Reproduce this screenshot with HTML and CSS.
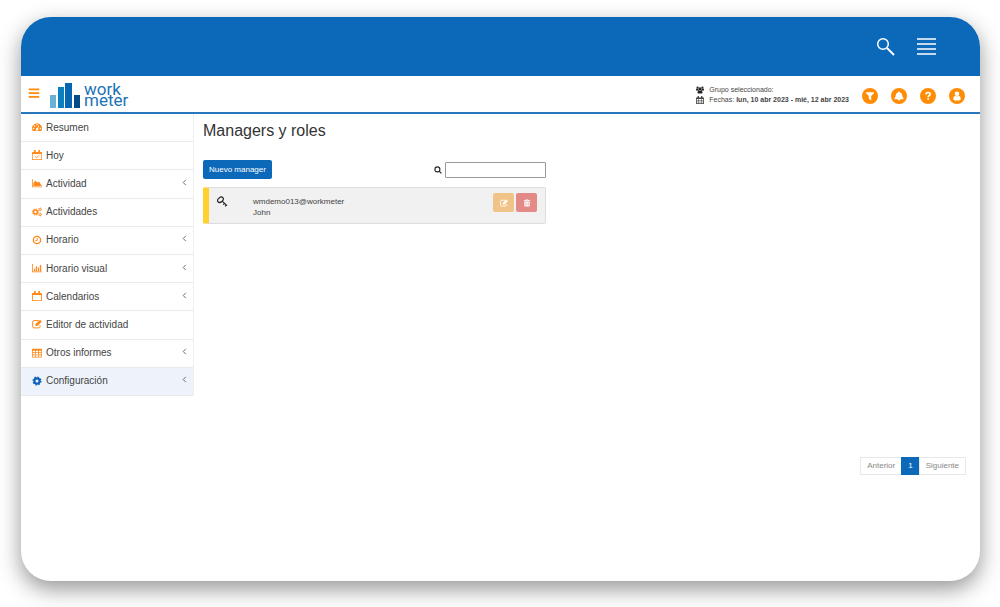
FILE: index.html
```html
<!DOCTYPE html>
<html lang="es">
<head>
    <meta charset="UTF-8">
    <meta name="viewport" content="width=device-width, initial-scale=1.0">
    <title>Managers y roles</title>
    <link rel="stylesheet" href="styles.css">
</head>
<body>
    <!-- Icon sprite -->
    <svg class="sprite" aria-hidden="true">
        <symbol id="i-dash" viewBox="0 0 16 16"><path fill-rule="evenodd" d="M8 2a8 8 0 0 0-6.700 12.300h13.400A8 8 0 0 0 8 2zM8 3.200a1.200 1.200 0 1 1 0 2.400a1.200 1.200 0 1 1 0-2.400zM4 5a1.200 1.200 0 1 1 0 2.400a1.200 1.200 0 1 1 0-2.400zM2.500 9a1.200 1.200 0 1 1 0 2.400a1.200 1.200 0 1 1 0-2.400zM13.500 9a1.200 1.200 0 1 1 0 2.400a1.200 1.200 0 1 1 0-2.400zM10.500 5.500l1 .4-1.900 4.300a2 2 0 1 1-1.300-.5z"/></symbol>
        <symbol id="i-check-cal" viewBox="0 0 16 16"><path fill-rule="evenodd" d="M1 3h2V1q0-1 1-1h1q1 0 1 1v2h4V1q0-1 1-1h1q1 0 1 1v2h2q1 0 1 1v11q0 1-1 1H1q-1 0-1-1V4q0-1 1-1zM1.200 6.500v8.300h13.600V6.500z"/><path d="M5 10.300l2.300 2.200 4.200-4.200" fill="none" stroke="currentColor" stroke-width="1.500"/></symbol>
        <symbol id="i-cal" viewBox="0 0 16 16"><path fill-rule="evenodd" d="M1 3h2V1q0-1 1-1h1q1 0 1 1v2h4V1q0-1 1-1h1q1 0 1 1v2h2q1 0 1 1v11q0 1-1 1H1q-1 0-1-1V4q0-1 1-1zM1.400 6.500v8.200h13.200V6.500z"/></symbol>
        <symbol id="i-cal-grid" viewBox="0 0 16 16"><path fill-rule="evenodd" d="M1 3h2V1q0-1 1-1h1q1 0 1 1v2h4V1q0-1 1-1h1q1 0 1 1v2h2q1 0 1 1v11q0 1-1 1H1q-1 0-1-1V4q0-1 1-1zM1.500 6v2.300h3V6zm4 0v2.300h4.500V6zm5.500 0v2.300h3.500V6zM1.500 9.300v2.200h3V9.300zm4 0v2.200h4.500V9.300zm5.500 0v2.200h3.500V9.300zM1.500 12.500v2.200h3v-2.200zm4 0v2.200h4.500v-2.200zm5.500 0v2.200h3.500v-2.200z"/></symbol>
        <symbol id="i-area" viewBox="0 0 16 16"><path d="M0 2h1.300v11.500H16v1.300H0zM2.200 12.800V8.500L5.200 4l3.200 3 3-1.500 4.100 7.300z"/></symbol>
        <symbol id="i-bars-chart" viewBox="0 0 16 16"><path d="M0 1.500h1.300v12h14.700v1.300H0zM3 9h2v4H3zM6 5h2v8H6zM9.300 7h2v6h-2zM12.500 3h2.200v10h-2.200z"/></symbol>
        <symbol id="i-cogs" viewBox="0 0 16 16"><g fill="none" stroke="currentColor"><circle cx="5.500" cy="8" r="3.200" stroke-width="2.600"/><circle cx="5.500" cy="8" r="4.900" stroke-width="1.600" stroke-dasharray="1.920"/><circle cx="13" cy="3.800" r="1.600" stroke-width="1.400"/><circle cx="13" cy="3.800" r="2.500" stroke-width="1" stroke-dasharray="1.300"/><circle cx="13" cy="12.200" r="1.600" stroke-width="1.400"/><circle cx="13" cy="12.200" r="2.500" stroke-width="1" stroke-dasharray="1.300"/></g></symbol>
        <symbol id="i-cog" viewBox="0 0 16 16"><g fill="none" stroke="currentColor"><circle cx="8" cy="8" r="4.200" stroke-width="3.500"/><circle cx="8" cy="8" r="6.300" stroke-width="2" stroke-dasharray="2.470"/></g></symbol>
        <symbol id="i-clock" viewBox="0 0 16 16"><g fill="none" stroke="currentColor"><circle cx="8" cy="8" r="5.800" stroke-width="2.200"/><path d="M8.500 4.500v4.200H5.200" stroke-width="1.400"/></g></symbol>
        <symbol id="i-edit" viewBox="0 0 16 16"><path d="M10.500 2.500H3.200Q1 2.500 1 5v7q0 2.200 2.200 2.200h7.500q2.200 0 2.200-2.200V10" fill="none" stroke="currentColor" stroke-width="1.600"/><path d="M12.800 1l3 3L9 11H5.500V7.800z"/></symbol>
        <symbol id="i-table" viewBox="0 0 16 16"><path fill-rule="evenodd" d="M1 1h14q1 0 1 1v12q0 1-1 1H1q-1 0-1-1V2q0-1 1-1zM1.200 4.500v2.300h3.700V4.500zm4.900 0v2.300h3.800V4.500zm5 0v2.300h3.700V4.500zM1.200 8v2.300h3.700V8zm4.900 0v2.300h3.800V8zm5 0v2.300h3.700V8zM1.200 11.500v2.300h3.700v-2.300zm4.900 0v2.300h3.800v-2.300zm5 0v2.300h3.700v-2.300z"/></symbol>
        <symbol id="i-chevron" viewBox="0 0 16 16"><path d="M11 2L5 8l6 6" fill="none" stroke="currentColor" stroke-width="2.200"/></symbol>
        <symbol id="i-menu" viewBox="0 0 16 16"><path d="M1 2h14v2.200H1zM1 7h14v2.200H1zM1 12h14v2.200H1z"/></symbol>
        <symbol id="i-search" viewBox="0 0 16 16"><g fill="none" stroke="currentColor" stroke-width="2.200"><circle cx="6.800" cy="6.800" r="5"/><path d="M10.500 10.500l4.300 4.300"/></g></symbol>
        <symbol id="i-key" viewBox="0 0 16 16"><g fill="none" stroke="currentColor" stroke-width="1.700"><ellipse cx="5" cy="5.500" rx="4.600" ry="3.200" transform="rotate(-40 5 5.500)"/><path d="M7.500 7.500l7 6.500M11.200 10.500l-2 2.200M14 12.500l-2.200 2.500"/></g></symbol>
        <symbol id="i-trash" viewBox="0 0 16 16"><path fill-rule="evenodd" d="M5 2.500Q5 1 6.500 1h3Q11 1 11 2.500h3.500V4h-13V2.500zm1.200 0h3.600L9.300 2H6.700zM2.500 5h11v8.500q0 1.500-1.500 1.500H4q-1.500 0-1.500-1.500zM5 7v6h1V7zm2.500 0v6h1V7zM10 7v6h1V7z"/></symbol>
        <symbol id="i-users" viewBox="0 0 16 16"><circle cx="3.200" cy="3.200" r="2.200"/><circle cx="12.800" cy="3.200" r="2.200"/><circle cx="8" cy="5.500" r="3"/><path d="M0 9V7q0-2 1.500-2l3 .6Q4.500 8 6 8.800H3.800zM16 9V7q0-2-1.500-2l-3 .6Q11.500 8 10 8.800h2.200zM3 13.500Q3 9 5.500 8.700q2.500 1 5 0Q13 9 13 13.500 13 15 11.500 15h-7Q3 15 3 13.500z"/></symbol>
        <symbol id="i-filter" viewBox="0 0 16 16"><path d="M2 2h12q1 .5.300 1.400L9.900 8v6q-.3 1-1.200.4L6.100 12V8L1.700 3.400Q1 2.500 2 2z"/></symbol>
        <symbol id="i-bell" viewBox="0 0 16 16"><path d="M7 1q1-1 2 0v.8Q12.800 2.500 13 6q.2 4 2.500 6-.2 1-1.200 1h-4.300q-.3 2-2 2t-2-2H1.700q-1 0-1.200-1Q2.800 10 3 6 3.200 2.500 7 1.800z"/></symbol>
        <symbol id="i-help" viewBox="0 0 16 16"><path d="M4.500 5.500Q5 2.300 8.200 2.300q3.300 0 3.300 2.600Q11.500 6.600 9.600 7.600 8.200 8.400 8.200 10" fill="none" stroke="currentColor" stroke-width="2.600"/><path d="M6.900 11.500h2.700V14H6.900z"/></symbol>
        <symbol id="i-user" viewBox="0 0 16 16"><circle cx="8" cy="4.500" r="3.700"/><path d="M2 12.500Q2 8 5 7.500q3 2 6 0Q14 8 14 12.500q0 2.500-2.500 2.500h-7Q2 15 2 12.500z"/></symbol>
    </svg>

    <div class="window">
        <div class="topbar">
            <button class="top-button" aria-label="Buscar">
                <svg class="top-icon" viewBox="0 0 20 20"><g fill="none" stroke="currentColor" stroke-width="1.500"><circle cx="7" cy="7" r="5.300"/><path d="M11 11l7 7" stroke-width="2"/></g></svg>
            </button>
            <button class="top-button" aria-label="Menú">
                <svg class="top-icon" viewBox="0 0 20 20"><path d="M1 2h19M1 7h19M1 12h19M1 17h19" fill="none" stroke="currentColor" stroke-width="1.500"/></svg>
            </button>
        </div>

        <header class="header">
            <button class="menu-toggle" aria-label="Mostrar menú"><svg class="icon-menu"><use href="#i-menu"/></svg></button>
            <a class="logo" href="#">
                <svg class="logo-bars" viewBox="0 0 30 25">
                    <path fill="#6bb1d6" d="M0 12h6v13H0z"/>
                    <path fill="#0a80c0" d="M8 4h6v21H8z"/>
                    <path fill="#0567b2" d="M15 0h7v25h-7z"/>
                    <path fill="#024b88" d="M24 12h6v13h-6z"/>
                </svg>
                <span class="logo-text">work<br>meter</span>
            </a>
            <div class="selection">
                <div class="selection-row"><svg class="icon-small dark"><use href="#i-users"/></svg><span>Grupo seleccionado:</span></div>
                <div class="selection-row"><svg class="icon-small"><use href="#i-cal-grid"/></svg><span>Fechas: <b>lun, 10 abr 2023 - mié, 12 abr 2023</b></span></div>
            </div>
            <div class="actions">
                <button class="round" aria-label="Filtro"><svg><use href="#i-filter"/></svg></button>
                <button class="round" aria-label="Avisos"><svg><use href="#i-bell"/></svg></button>
                <button class="round" aria-label="Ayuda"><svg><use href="#i-help"/></svg></button>
                <button class="round" aria-label="Usuario"><svg><use href="#i-user"/></svg></button>
            </div>
        </header>

        <div class="content">
            <nav class="sidebar">
                <a href="#"><svg class="icon"><use href="#i-dash"/></svg>Resumen</a>
                <a href="#"><svg class="icon"><use href="#i-check-cal"/></svg>Hoy</a>
                <a href="#"><svg class="icon"><use href="#i-area"/></svg>Actividad<svg class="chevron"><use href="#i-chevron"/></svg></a>
                <a href="#"><svg class="icon"><use href="#i-cogs"/></svg>Actividades</a>
                <a href="#"><svg class="icon"><use href="#i-clock"/></svg>Horario<svg class="chevron"><use href="#i-chevron"/></svg></a>
                <a href="#"><svg class="icon"><use href="#i-bars-chart"/></svg>Horario visual<svg class="chevron"><use href="#i-chevron"/></svg></a>
                <a href="#"><svg class="icon"><use href="#i-cal"/></svg>Calendarios<svg class="chevron"><use href="#i-chevron"/></svg></a>
                <a href="#"><svg class="icon"><use href="#i-edit"/></svg>Editor de actividad</a>
                <a href="#"><svg class="icon"><use href="#i-table"/></svg>Otros informes<svg class="chevron"><use href="#i-chevron"/></svg></a>
                <a href="#" class="active"><svg class="icon"><use href="#i-cog"/></svg>Configuración<svg class="chevron"><use href="#i-chevron"/></svg></a>
            </nav>

            <main class="main">
                <h1>Managers y roles</h1>
                <section class="managers">
                    <div class="toolbar">
                        <button class="new-manager">Nuevo manager</button>
                        <div class="search">
                            <label for="search" aria-label="Buscar manager"><svg class="icon-small dark"><use href="#i-search"/></svg></label>
                            <input type="text" id="search">
                        </div>
                    </div>
                    <article class="manager">
                        <svg class="key"><use href="#i-key"/></svg>
                        <div class="manager-name">wmdemo013@workmeter<br>John</div>
                        <button class="edit" aria-label="Editar"><svg class="icon-small"><use href="#i-edit"/></svg></button>
                        <button class="delete" aria-label="Eliminar"><svg class="icon-small"><use href="#i-trash"/></svg></button>
                    </article>
                </section>
                <div class="pagination">
                    <a href="#">Anterior</a>
                    <a href="#" class="current">1</a>
                    <a href="#">Siguiente</a>
                </div>
            </main>
        </div>
    </div>
</body>
</html>
```
FILE: styles.css
```css
* {
    box-sizing: border-box;
}

body {
    margin: 0;
    padding: 17px 20px 26px 21px;
    min-height: 100vh;
    display: flex;
    background: #fff;
    color: #444;
    font-family: "Liberation Sans", Arial, sans-serif;
    font-size: 8px;
}

a {
    color: inherit;
    text-decoration: none;
}

button {
    padding: 0;
    border: none;
    background: none;
    color: inherit;
    font: inherit;
    cursor: pointer;
}

svg {
    display: block;
    fill: currentColor;
}

.sprite {
    display: none;
}

.window {
    flex: 1;
    display: flex;
    flex-direction: column;
    background: #fff;
    border-radius: 30px;
    overflow: hidden;
    box-shadow: 0 8px 22px rgba(0, 0, 0, 0.42);
}

/* Top bar */
.topbar {
    height: 59px;
    padding-right: 44px;
    display: flex;
    justify-content: flex-end;
    align-items: center;
    gap: 20px;
    background: #0c69b9;
    color: #fff;
}

.top-icon {
    width: 20px;
    height: 20px;
}

/* Header */
.header {
    height: 38px;
    padding: 2px 15px 0 7px;
    display: flex;
    align-items: center;
    border-bottom: 2px solid #2878bd;
}

.menu-toggle {
    align-self: flex-start;
    margin-top: 9px;
    color: #ff8a0c;
}

.icon-menu {
    width: 12px;
    height: 12px;
}

.logo {
    margin-left: 10px;
    display: flex;
    align-items: center;
    gap: 4px;
}

.logo-bars {
    width: 30px;
    height: 25px;
}

.logo-text {
    font-family: Roboto, sans-serif;
    font-size: 17px;
    line-height: 11px;
    color: #1c73b5;
}

.selection {
    margin-left: auto;
    font-size: 7px;
}

.selection-row {
    display: flex;
    align-items: center;
    gap: 5px;
    line-height: 10px;
}

.icon-small {
    width: 8px;
    height: 8px;
}

.dark {
    color: #222;
}

.actions {
    align-self: flex-end;
    margin: 0 0 8px 13px;
    display: flex;
    gap: 13px;
}

.round {
    width: 16px;
    height: 16px;
    display: grid;
    place-items: center;
    border-radius: 50%;
    background: #ff8c05;
    color: #fff;
}

.round svg {
    width: 10px;
    height: 10px;
}

/* Sidebar */
.content {
    flex: 1;
    display: flex;
}

.sidebar {
    width: 173px;
    min-height: 282px;
    display: grid;
    grid-auto-rows: 1fr;
    align-self: flex-start;
    border-right: 1px solid #eee;
    font-size: 10px;
}

.sidebar a {
    padding: 0 5px 1px 11px;
    display: flex;
    align-items: center;
    gap: 4px;
    border-bottom: 1px solid #eaeaea;
}

.sidebar .active {
    background: #eef3fb;
}

.icon {
    width: 10px;
    height: 10px;
    color: #ff8a1c;
}

.active .icon {
    color: #0c62b8;
}

.chevron {
    width: 7px;
    height: 7px;
    margin: 0 0 2px auto;
    color: #666;
}

/* Main */
.main {
    flex: 1;
    padding: 8px 14px 0 9px;
}

h1 {
    margin: 0;
    font-size: 16px;
    line-height: 18px;
    font-weight: normal;
    color: #333;
}

.managers {
    max-width: 343px;
    margin-top: 20px;
}

.toolbar {
    display: flex;
    justify-content: space-between;
    align-items: center;
}

.new-manager {
    height: 19px;
    padding: 0 6px;
    border-radius: 2px;
    background: #0c69b9;
    color: #fff;
}

.search {
    display: flex;
    align-items: center;
    gap: 3px;
}

.search input {
    width: 101px;
    height: 16px;
    padding: 0 3px;
    border: 1px solid #999;
    border-radius: 1px;
    font: inherit;
}

.manager {
    min-height: 37px;
    margin-top: 8px;
    padding: 5px 8px 5px 8px;
    display: flex;
    align-items: flex-start;
    gap: 2px;
    background: #f1f1f1;
    border: 1px solid #ddd;
    border-left: 6px solid #ffd12e;
    border-radius: 2px;
}

.key {
    width: 11px;
    height: 11px;
    margin-top: 3px;
    color: #222;
}

.manager-name {
    flex: 1;
    margin: 3px 0 0 23px;
    line-height: 11px;
}

.edit,
.delete {
    width: 21px;
    height: 19px;
    display: grid;
    place-items: center;
    border-radius: 2px;
    color: #fff;
}

.edit {
    background: #f0c488;
}

.delete {
    background: #e38986;
}

.pagination {
    margin-top: 233px;
    display: flex;
    justify-content: flex-end;
    color: #888;
}

.pagination a {
    padding: 0 6px;
    line-height: 16px;
    border: 1px solid #e8e8e8;
}

.pagination a + a {
    margin-left: -1px;
}

.pagination .current {
    background: #0c69b9;
    border-color: #0c69b9;
    color: #fff;
}
```
